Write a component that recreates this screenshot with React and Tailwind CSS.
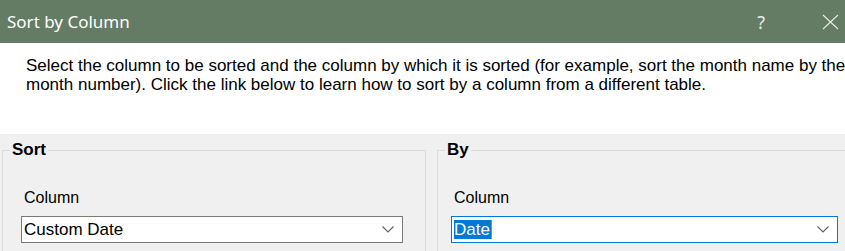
const Chevron = ({ className }) => (
  <svg width="12" height="7" viewBox="0 0 12 7" className={className}>
    <path d="M0.5 0.5 L6 6 L11.5 0.5" fill="none" stroke="#5f5f5f" strokeWidth="1.1" />
  </svg>
);

const Group = ({ title, className, inputClass, children }) => (
  <fieldset className={`border border-[#dcdcdc] h-[130px] shrink-0 ${className}`}>
    <legend className="ml-[7px] px-[2px] font-bold text-[17px] leading-[18px] text-black">
      {title}
    </legend>
    <div className={`flex flex-col ${inputClass}`}>
      <div className="mt-[30px] pl-[3px] text-[16px] leading-[18px] text-black">Column</div>
      {children}
    </div>
  </fieldset>
);

export default function App() {
  return (
    <div
      className="w-[845px] h-[251px] overflow-hidden bg-[#f0f0f0]"
      style={{ fontFamily: '"Liberation Sans", Arial, sans-serif' }}
    >
      <div className="h-[43px] bg-[#647c64] flex items-center text-white">
        <span
          className="pl-[7px] text-[17px] flex-1"
          style={{ fontFamily: '"Noto Sans", "Open Sans", sans-serif' }}
        >
          Sort by Column
        </span>
        <span
          className="text-[#e6ebe6] text-[18px] mr-[57px] mt-[1px]"
          style={{ fontFamily: '"Noto Sans", sans-serif' }}
        >
          ?
        </span>
        <svg width="17" height="16" viewBox="0 0 17 16" className="mr-[6px]">
          <path d="M1 1 L16 15 M16 1 L1 15" stroke="#e6ebe6" strokeWidth="1.1" />
        </svg>
      </div>
      <div className="h-[91px] bg-white pl-[26px] pt-[13px] text-[17px] leading-[19px] text-black whitespace-nowrap overflow-hidden">
        <p>
          Select the column to be sorted and the column by which it is sorted (for example, sort the month name by the
          <br />
          month number). Click the link below to learn how to sort by a column from a different table.
        </p>
      </div>
      <div className="flex pt-[7px] pl-[2px] gap-[11px]">
        <Group title="Sort" className="w-[424px]" inputClass="pl-[18px]">
          <div className="mt-[9px] w-[382px] h-[27px] bg-white border border-[#7a7a7a] flex items-center pl-[2px] pr-[8px]">
            <span className="flex-1 text-[17px] text-black">Custom Date</span>
            <Chevron />
          </div>
        </Group>
        <Group title="By" className="w-[420px]" inputClass="pl-[13px]">
          <div className="mt-[9px] w-[387px] h-[27px] bg-white border border-[#0078d7] flex items-center pl-[2px] pr-[8px]">
            <span className="flex-1 flex items-center">
              <span className="bg-[#0078d7] text-white text-[17px] leading-[19px] pr-[1px]">Date</span>
              <span className="w-[1px] h-[19px] bg-[#e87722]" />
            </span>
            <Chevron />
          </div>
        </Group>
      </div>
    </div>
  );
}
